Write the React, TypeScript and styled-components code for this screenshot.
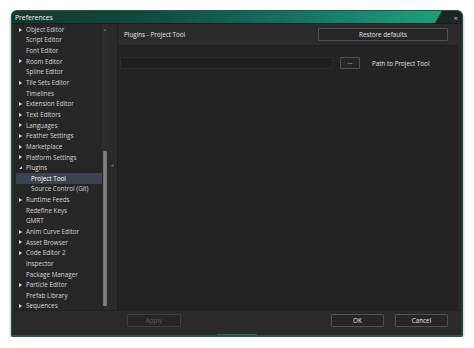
import React from 'react';
import styled, { createGlobalStyle } from 'styled-components';

const GlobalStyle = createGlobalStyle`
	html, body {
		margin: 0;
		padding: 0;
		background: #ffffff;
	}
	body {
		font-family: 'Open Sans', 'Noto Sans', sans-serif;
		font-size: 6.3px;
		color: #d6d6d6;
	}
`;

const Window = styled.div`
	margin: 10px 0 0 11px;
	width: 452px;
	height: 327px;
	box-sizing: border-box;
	display: flex;
	flex-direction: column;
	background: #2a2a2a;
	border: 1px solid #2b5247;
	border-bottom-width: 2px;
	border-radius: 6px 6px 2px 2px;
	box-shadow: 0 2px 3px rgba(0, 0, 0, 0.45);
	overflow: hidden;
`;

const TitleBar = styled.div`
	position: relative;
	height: 12px;
	flex: none;
	display: flex;
	align-items: center;
	padding-left: 3px;
	background: linear-gradient(90deg, #15382f 0%, #124a3e 30%, #167060 62%, #1c9c7b 92%);
	border-bottom: 1px solid #1a1f1e;
	color: #f2f2f2;
	font-size: 6.8px;
`;

const CloseBlock = styled.div`
	position: absolute;
	right: 0;
	top: 0;
	bottom: 0;
	width: 27px;
	background: #1d2624;
	clip-path: polygon(7px 0, 100% 0, 100% 100%, 0 100%);
	display: flex;
	align-items: center;
	justify-content: flex-end;
	padding-right: 4px;
	box-sizing: border-box;
	color: #c8c8c8;
	font-size: 8px;
`;

const Main = styled.div`
	flex: 1;
	display: flex;
	padding: 0 4px 0 2px;
	min-height: 0;
`;

const Tree = styled.div`
	width: 88px;
	background: #262626;
	display: flex;
	flex-direction: column;
`;

const Row = styled.div<{ $indent?: boolean; $selected?: boolean }>`
	height: 10.65px;
	flex: none;
	display: flex;
	align-items: center;
	padding-left: ${p => (p.$indent ? '15px' : '10px')};
	margin-left: 2px;
	background: ${p => (p.$selected ? '#3b444d' : 'transparent')};
	color: ${p => (p.$selected ? '#ffffff' : '#d4d4d4')};
	white-space: nowrap;
	position: relative;
`;

const Arrow = styled.span<{ $open?: boolean }>`
	position: absolute;
	left: 3px;
	top: 3.5px;
	width: 0;
	height: 0;
	${p =>
		p.$open
			? `border-right: 3px solid #cfcfcf; border-top: 3px solid transparent; top: 4px;`
			: `border-left: 3px solid #e0e0e0; border-top: 2px solid transparent; border-bottom: 2px solid transparent;`}
`;

const ScrollTrack = styled.div`
	width: 6px;
	background: #2c2c2c;
	display: flex;
	flex-direction: column;
	align-items: center;
`;

const ScrollArrow = styled.div`
	height: 10px;
	width: 6px;
	display: flex;
	align-items: center;
	justify-content: center;
	color: #6a6a6a;
	font-size: 4px;
`;

const ScrollThumb = styled.div`
	margin-top: 117px;
	width: 4px;
	flex: 1;
	margin-bottom: 4px;
	background: linear-gradient(90deg, #6a6a6a, #8a8a8a 50%, #6a6a6a);
	border-radius: 1px;
`;

const Splitter = styled.div`
	width: 9px;
	display: flex;
	align-items: center;
	justify-content: center;
	color: #9a9a9a;
	font-size: 6px;
	padding-bottom: 4px;
	box-sizing: border-box;
`;

const RightPanel = styled.div`
	flex: 1;
	display: flex;
	flex-direction: column;
	background: #242424;
`;

const Header = styled.div`
	height: 21px;
	flex: none;
	display: flex;
	align-items: center;
	justify-content: space-between;
	padding: 0 10px 0 6px;
	background: #2b2b2b;
	border-bottom: 1px solid #1e1e1e;
	border-left: 1px solid #202020;
	color: #e6e6e6;
`;

const Button = styled.div<{ $width: number; $disabled?: boolean }>`
	width: ${p => p.$width}px;
	height: 13px;
	box-sizing: border-box;
	display: flex;
	align-items: center;
	justify-content: center;
	background: #262626;
	border: 1px solid ${p => (p.$disabled ? '#3e3e3e' : '#505050')};
	border-radius: 1px;
	color: ${p => (p.$disabled ? '#5c5c5c' : '#e4e4e4')};
`;

const Content = styled.div`
	flex: 1;
	margin: 2px 0 0 0;
	background: #232323;
	border-left: 1px solid #1c1c1c;
	padding: 9px 0 0 2px;
`;

const FieldRow = styled.div`
	display: flex;
	align-items: center;
`;

const TextField = styled.div`
	width: 213px;
	height: 12px;
	box-sizing: border-box;
	background: #202020;
	border: 1px solid #2c2c2c;
`;

const SmallButton = styled(Button)`
	margin-left: 7px;
	height: 12px;
	padding-bottom: 3px;
`;

const Label = styled.span`
	margin-left: 12px;
	color: #e2e2e2;
`;

const Footer = styled.div`
	height: 21px;
	flex: none;
	display: flex;
	align-items: flex-start;
	padding: 3px 14px 0 115px;
	gap: 11px;
	border-top: 1px solid #222;
	position: relative;
`;

const Spacer = styled.div`
	flex: 1;
`;

const Grip = styled.div`
	position: absolute;
	left: 205px;
	bottom: 0;
	width: 40px;
	height: 1px;
	background: #3f5d55;
`;

type Item = { label: string; arrow?: boolean; open?: boolean; indent?: boolean; selected?: boolean };

const items: Item[] = [
	{ label: 'Object Editor', arrow: true },
	{ label: 'Script Editor' },
	{ label: 'Font Editor' },
	{ label: 'Room Editor', arrow: true },
	{ label: 'Spline Editor' },
	{ label: 'Tile Sets Editor', arrow: true },
	{ label: 'Timelines' },
	{ label: 'Extension Editor', arrow: true },
	{ label: 'Text Editors', arrow: true },
	{ label: 'Languages', arrow: true },
	{ label: 'Feather Settings', arrow: true },
	{ label: 'Marketplace', arrow: true },
	{ label: 'Platform Settings', arrow: true },
	{ label: 'Plugins', arrow: true, open: true },
	{ label: 'Project Tool', indent: true, selected: true },
	{ label: 'Source Control (Git)', indent: true },
	{ label: 'Runtime Feeds', arrow: true },
	{ label: 'Redefine Keys' },
	{ label: 'GMRT' },
	{ label: 'Anim Curve Editor', arrow: true },
	{ label: 'Asset Browser', arrow: true },
	{ label: 'Code Editor 2', arrow: true },
	{ label: 'Inspector' },
	{ label: 'Package Manager' },
	{ label: 'Particle Editor', arrow: true },
	{ label: 'Prefab Library' },
	{ label: 'Sequences', arrow: true },
];

const App = () => {
	return (
		<>
			<GlobalStyle />
			<Window>
				<TitleBar>
					Preferences
					<CloseBlock>×</CloseBlock>
				</TitleBar>
				<Main>
					<Tree>
						{items.map(item => (
							<Row key={item.label} $indent={item.indent} $selected={item.selected}>
								{item.arrow && <Arrow $open={item.open} />}
								{item.label}
							</Row>
						))}
					</Tree>
					<ScrollTrack>
						<ScrollArrow>▲</ScrollArrow>
						<ScrollThumb />
					</ScrollTrack>
					<Splitter>«</Splitter>
					<RightPanel>
						<Header>
							Plugins - Project Tool
							<Button $width={130}>Restore defaults</Button>
						</Header>
						<Content>
							<FieldRow>
								<TextField />
								<SmallButton $width={20}>...</SmallButton>
								<Label>Path to Project Tool</Label>
							</FieldRow>
						</Content>
					</RightPanel>
				</Main>
				<Footer>
					<Button $width={54} $disabled>
						Apply
					</Button>
					<Spacer />
					<Button $width={53}>OK</Button>
					<Button $width={53}>Cancel</Button>
					<Grip />
				</Footer>
			</Window>
		</>
	);
};

export default App;
